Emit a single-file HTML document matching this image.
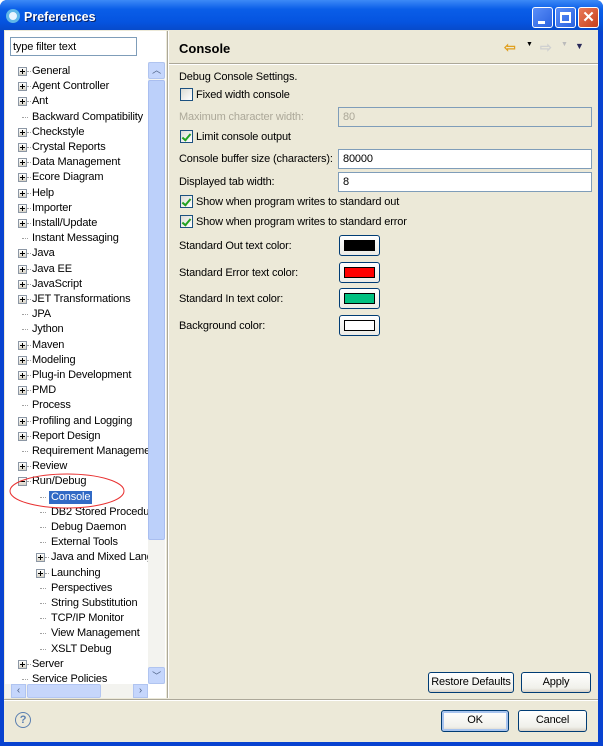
<!DOCTYPE html>
<html><head><meta charset="utf-8"><style>
*{margin:0;padding:0;box-sizing:border-box}
body{width:603px;height:747px;background:#fff;position:relative;overflow:hidden;font-family:"Liberation Sans",sans-serif;font-size:11px;letter-spacing:-0.15px;color:#000}
.a{position:absolute}
.win{left:0;top:0;width:603px;height:746px;background:#0842d0;border-radius:7px 7px 0 0}
.title{left:0;top:0;width:603px;height:31px;border-radius:7px 7px 0 0;background:linear-gradient(#3d8af7,#0a5ee8 30%,#0554e0 70%,#0649c8)}
.body{left:4px;top:30px;width:594px;height:712px;background:#ece9d8}
.tree{left:5px;top:31px;width:161px;height:667px;background:#fff}
.it{position:absolute;white-space:nowrap;line-height:13px}
.pl{position:absolute;width:9px;height:9px;border:1px solid #8c97a5;background:linear-gradient(#fff,#d8d4c8)}
.pl:before{content:"";position:absolute;left:1px;top:3px;width:5px;height:1px;background:#000}
.pl.p:after{content:"";position:absolute;left:3px;top:1px;width:1px;height:5px;background:#000}
.dl{position:absolute;border-top:1px dotted #a0a0a0;width:6px}
.cb{position:absolute;width:13px;height:13px;border:1px solid #1c5180;background:linear-gradient(135deg,#dcdcd5,#fff)}
.ck:after{content:"";position:absolute;left:3px;top:1px;width:3px;height:7px;border:solid #21a121;border-width:0 2px 2px 0;transform:rotate(40deg)}
.tx{position:absolute;height:20px;border:1px solid #7f9db9;background:#fff;padding:3px 4px}
.btn{position:absolute;border:1px solid #003c74;border-radius:3px;background:linear-gradient(#fff,#f0f0ea 80%,#d6d0c5);text-align:center;line-height:19px}
.cbtn{position:absolute;width:41px;height:21px;border:1px solid #003c74;border-radius:3px;background:linear-gradient(#fff,#ecebe6);left:339px}
.cbtn i{position:absolute;left:4px;top:4px;width:31px;height:11px;border:1px solid #000}
</style></head><body>
<div class="a win"></div>
<div class="a title"></div>
<div class="a" style="left:6px;top:9px;width:14px;height:14px;border-radius:50%;background:#e8f4ff;border:3px solid #5fb7e8"></div>
<div class="a" style="left:24px;top:10px;color:#fff;font-weight:bold;font-size:12.5px;letter-spacing:0;text-shadow:1px 1px #0a246a">Preferences</div>
<div class="a" style="left:532px;top:7px;width:21px;height:21px;border:1px solid #fff;border-radius:3px;background:linear-gradient(135deg,#5a8ef8,#2a62e0)"><div class="a" style="left:5px;top:13px;width:7px;height:3px;background:#fff"></div></div>
<div class="a" style="left:555px;top:7px;width:21px;height:21px;border:1px solid #fff;border-radius:3px;background:linear-gradient(135deg,#5a8ef8,#2a62e0)"><div class="a" style="left:4px;top:4px;width:11px;height:11px;border:2px solid #fff;border-top-width:3px"></div></div>
<div class="a" style="left:578px;top:7px;width:21px;height:21px;border:1px solid #fff;border-radius:3px;background:linear-gradient(135deg,#e87a5a,#c8401c);color:#fff;font-weight:bold;font-size:15px;text-align:center;line-height:19px">✕</div>
<div class="a body"></div>
<div class="a tree"></div>
<div class="a" style="left:10px;top:37px;width:127px;height:19px;border:1px solid #7f9db9;background:#fff;padding:3px 2px">type filter text</div>
<div id="t"></div>
<!-- scrollbars -->
<div class="a" style="left:148px;top:62px;width:17px;height:622px;background:#f3f3ef"></div>
<div class="a" style="left:148px;top:62px;width:17px;height:17px;border-radius:2px;background:#c5d6fc;border:1px solid #b0c4f0;color:#4d6185;text-align:center;font-size:9px;line-height:14px">︿</div>
<div class="a" style="left:148px;top:80px;width:17px;height:460px;border-radius:2px;background:#bcd0fa;border:1px solid #a9bef0"></div>
<div class="a" style="left:148px;top:667px;width:17px;height:17px;border-radius:2px;background:#c5d6fc;border:1px solid #b0c4f0;color:#4d6185;text-align:center;font-size:9px;line-height:16px">﹀</div>
<div class="a" style="left:5px;top:684px;width:143px;height:14px;background:#f3f3ef"></div>
<div class="a" style="left:11px;top:684px;width:15px;height:14px;background:#c5d6fc;border:1px solid #b0c4f0;color:#4d6185;font-size:10px;line-height:11px;text-align:center">‹</div>
<div class="a" style="left:27px;top:684px;width:74px;height:14px;background:#c6d6fb;border:1px solid #b3c6f3;border-radius:2px"></div>
<div class="a" style="left:133px;top:684px;width:15px;height:14px;background:#c5d6fc;border:1px solid #b0c4f0;color:#4d6185;font-size:10px;line-height:11px;text-align:center">›</div>
<!-- sash -->
<div class="a" style="left:167px;top:31px;width:1px;height:667px;background:#aca899"></div>
<div class="a" style="left:168px;top:31px;width:1px;height:667px;background:#fff"></div>
<!-- right header -->
<div class="a" style="left:179px;top:41px;font-weight:bold;font-size:13px;letter-spacing:0">Console</div>
<div class="a" style="left:504px;top:39px;color:#e0a020;font-size:14px;font-weight:bold">⇦</div>
<div class="a" style="left:526px;top:41px;font-size:7px">▼</div>
<div class="a" style="left:540px;top:39px;color:#cfd0d0;font-size:14px;font-weight:bold">⇨</div>
<div class="a" style="left:561px;top:41px;font-size:7px;color:#bbb">▼</div>
<div class="a" style="left:575px;top:41px;font-size:9px;color:#2a2a5a">▼</div>
<div class="a" style="left:169px;top:63px;width:429px;height:1px;background:#aca899"></div>
<div class="a" style="left:169px;top:64px;width:429px;height:1px;background:#fff"></div>
<!-- form -->
<div class="a" style="left:179px;top:71px">Debug Console Settings.</div>
<div class="cb" style="left:180px;top:88px"></div><div class="a" style="left:196px;top:89px">Fixed width console</div>
<div class="a" style="left:179px;top:111px;color:#aca899">Maximum character width:</div>
<div class="tx" style="left:338px;top:107px;width:254px;background:#ece9d8;color:#aca899">80</div>
<div class="cb ck" style="left:180px;top:130px"></div><div class="a" style="left:196px;top:131px">Limit console output</div>
<div class="a" style="left:179px;top:153px">Console buffer size (characters):</div>
<div class="tx" style="left:338px;top:149px;width:254px">80000</div>
<div class="a" style="left:179px;top:176px">Displayed tab width:</div>
<div class="tx" style="left:338px;top:172px;width:254px">8</div>
<div class="cb ck" style="left:180px;top:195px"></div><div class="a" style="left:196px;top:196px">Show when program writes to standard out</div>
<div class="cb ck" style="left:180px;top:215px"></div><div class="a" style="left:196px;top:216px">Show when program writes to standard error</div>
<div class="a" style="left:179px;top:240px">Standard Out text color:</div><div class="cbtn" style="top:235px"><i style="background:#000"></i></div>
<div class="a" style="left:179px;top:267px">Standard Error text color:</div><div class="cbtn" style="top:262px"><i style="background:#f00"></i></div>
<div class="a" style="left:179px;top:293px">Standard In text color:</div><div class="cbtn" style="top:288px"><i style="background:#00c080"></i></div>
<div class="a" style="left:179px;top:320px">Background color:</div><div class="cbtn" style="top:315px"><i style="background:#fff"></i></div>
<div class="btn" style="left:428px;top:672px;width:86px;height:21px">Restore Defaults</div>
<div class="btn" style="left:521px;top:672px;width:70px;height:21px">Apply</div>
<div class="a" style="left:4px;top:699px;width:594px;height:1px;background:#aca899"></div>
<div class="a" style="left:4px;top:700px;width:594px;height:1px;background:#fff"></div>
<div class="a" style="left:15px;top:712px;width:16px;height:16px;border-radius:50%;border:1px solid #5a7fb0;color:#5a7fb0;text-align:center;line-height:14px;font-weight:bold;font-size:11px">?</div>
<div class="btn" style="left:441px;top:710px;width:68px;height:22px;box-shadow:inset 0 0 0 2px #a8c4ee">OK</div>
<div class="btn" style="left:518px;top:710px;width:69px;height:22px">Cancel</div>
<svg class="a" style="left:0;top:460px" width="140" height="60"><ellipse cx="67" cy="31" rx="57" ry="17" fill="none" stroke="#e83030" stroke-width="1"/></svg>
<script>
var items=[[0,"p","General"],[0,"p","Agent Controller"],[0,"p","Ant"],[0,"","Backward Compatibility"],[0,"p","Checkstyle"],[0,"p","Crystal Reports"],[0,"p","Data Management"],[0,"p","Ecore Diagram"],[0,"p","Help"],[0,"p","Importer"],[0,"p","Install/Update"],[0,"","Instant Messaging"],[0,"p","Java"],[0,"p","Java EE"],[0,"p","JavaScript"],[0,"p","JET Transformations"],[0,"","JPA"],[0,"","Jython"],[0,"p","Maven"],[0,"p","Modeling"],[0,"p","Plug-in Development"],[0,"p","PMD"],[0,"","Process"],[0,"p","Profiling and Logging"],[0,"p","Report Design"],[0,"","Requirement Managemen"],[0,"p","Review"],[0,"m","Run/Debug"],[1,"","Console"],[1,"","DB2 Stored Procedure"],[1,"","Debug Daemon"],[1,"","External Tools"],[1,"p","Java and Mixed Langu"],[1,"p","Launching"],[1,"","Perspectives"],[1,"","String Substitution"],[1,"","TCP/IP Monitor"],[1,"","View Management"],[1,"","XSLT Debug"],[0,"p","Server"],[0,"","Service Policies"]];
var h="";
items.forEach(function(it,i){var y=64+i*15.2;var x=it[0]?51:32;var bx=it[0]?36:18;
if(it[1])h+='<div class="pl '+(it[1]=="p"?"p":"")+'" style="left:'+bx+'px;top:'+(y+3)+'px"></div>';
else h+='<div class="dl" style="left:'+(bx+4)+'px;top:'+(y+7)+'px"></div>';
if(it[1])h+='<div class="dl" style="left:'+(bx+9)+'px;top:'+(y+7)+'px;width:4px"></div>';
var s=it[2]=="Console"?'background:#316ac5;color:#fff;padding:0 2px;margin-left:-2px;':'';
h+='<div class="it" style="left:'+x+'px;top:'+(y+1)+'px;'+s+'">'+it[2]+'</div>';});
document.getElementById("t").innerHTML='<div style="position:absolute;left:0;top:0;width:148px;height:684px;overflow:hidden">'+h+'</div>';
</script>
</body></html>
